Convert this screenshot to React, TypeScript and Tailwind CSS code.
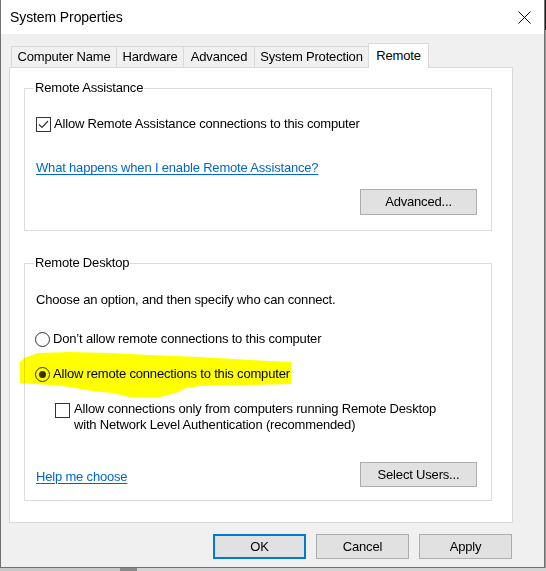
import React from "react";

function CheckBox({ checked }: { checked?: boolean }) {
  return (
    <span className="w-[15px] h-[15px] shrink-0 border border-[#333333] bg-white flex items-center justify-center">
      {checked && (
        <svg width="13" height="13" viewBox="0 0 13 13">
          <polyline points="2,6.5 5,9.5 11,3" fill="none" stroke="#333333" strokeWidth="1.2" />
        </svg>
      )}
    </span>
  );
}

function Radio({ checked }: { checked?: boolean }) {
  return (
    <span className="w-[15px] h-[15px] shrink-0 rounded-full border border-[#333333] bg-white flex items-center justify-center">
      {checked && <span className="w-[7px] h-[7px] rounded-full bg-[#333333]" />}
    </span>
  );
}

function Btn({ children, w, primary }: { children: React.ReactNode; w: string; primary?: boolean }) {
  return (
    <div
      className={`${w} flex items-center justify-center bg-[#e1e1e1] ${
        primary ? "border-2 border-[#0078d7]" : "border border-[#adadad]"
      }`}
    >
      {children}
    </div>
  );
}

function Tab({ label, w }: { label: string; w: string }) {
  return (
    <div className={`${w} h-[21px] border-t border-l border-[#d9d9d9] bg-[#f0f0f0] flex items-center justify-center`}>
      {label}
    </div>
  );
}

export default function App() {
  return (
    <div className="relative w-[546px] h-[571px] bg-[#c8c8c8] font-['Liberation_Sans',Arial,sans-serif] text-[13px] tracking-[-0.18px] text-black flex flex-col overflow-hidden">
      <div className="flex">
        <div className="w-[545px] h-[568px] border-l border-r border-b border-[#707070] bg-[#f0f0f0] flex flex-col">
          {/* title bar */}
          <div className="h-[34px] bg-white flex items-center justify-between pl-[9px] pr-[13px]">
            <span className="text-[14px] leading-none tracking-[-0.1px]">System Properties</span>
            <svg width="13" height="13" viewBox="0 0 13 13">
              <line x1="0.5" y1="0.5" x2="12.5" y2="12.5" stroke="#000" strokeWidth="1" />
              <line x1="12.5" y1="0.5" x2="0.5" y2="12.5" stroke="#000" strokeWidth="1" />
            </svg>
          </div>

          {/* tabs */}
          <div className="h-[33px] flex items-end pl-[10px]">
            <Tab label="Computer Name" w="w-[105px]" />
            <Tab label="Hardware" w="w-[67px]" />
            <Tab label="Advanced" w="w-[71px]" />
            <Tab label="System Protection" w="w-[114px]" />
            <div className="relative z-10 w-[61px] h-[25px] -mb-px border-t border-l border-r border-[#d9d9d9] bg-white flex justify-center pt-[2px]">
              Remote
            </div>
          </div>

          {/* pane */}
          <div className="ml-[8px] w-[504px] h-[456px] border border-[#d9d9d9] bg-white flex flex-col">
            {/* Remote Assistance group */}
            <div className="ml-[14px] mt-[20px] w-[468px] h-[143px] border border-[#dcdcdc] flex flex-col pl-[11px] pr-[14px]">
              <div className="-mt-[10px] h-[18px] leading-[18px] -ml-[2px] px-[1px] bg-white w-fit">Remote Assistance</div>
              <div className="mt-[17px] h-[20px] flex items-center gap-[3px]">
                <CheckBox checked />
                <span>Allow Remote Assistance connections to this computer</span>
              </div>
              <div className="mt-[24px] h-[20px] flex items-center">
                <span className="text-[#0066cc] underline underline-offset-2">What happens when I enable Remote Assistance?</span>
              </div>
              <div className="mt-[11px] flex justify-end">
                <Btn w="w-[117px] h-[26px]">Advanced...</Btn>
              </div>
            </div>

            {/* Remote Desktop group */}
            <div className="ml-[14px] mt-[32px] w-[468px] h-[238px] border border-[#dcdcdc] flex flex-col pl-[11px] pr-[14px]">
              <div className="-mt-[10px] h-[18px] leading-[18px] -ml-[2px] px-[1px] bg-white w-fit">Remote Desktop</div>
              <div className="mt-[18px] h-[20px] flex items-center">Choose an option, and then specify who can connect.</div>
              <div className="mt-[19px] h-[20px] flex items-center gap-[3px] -ml-px">
                <Radio />
                <span>Don’t allow remote connections to this computer</span>
              </div>
              <div className="mt-[15px] h-[20px] flex items-center gap-[3px] -ml-px">
                <Radio checked />
                <span>Allow remote connections to this computer</span>
              </div>
              <div className="mt-[17px] flex items-start gap-[4px] ml-[19px]">
                <div className="pt-[2px]">
                  <CheckBox />
                </div>
                <div className="leading-[16px]">
                  Allow connections only from computers running Remote Desktop
                  <br />
                  with Network Level Authentication (recommended)
                </div>
              </div>
              <div className="mt-[29px] h-[25px] flex items-center justify-between">
                <span className="mt-[4px] text-[#0066cc] underline underline-offset-2">Help me choose</span>
                <Btn w="w-[117px] h-[25px]">Select Users...</Btn>
              </div>
            </div>
          </div>

          {/* bottom buttons */}
          <div className="mt-[11px] flex gap-[10px] pl-[212px]">
            <Btn w="w-[93px] h-[25px]" primary>OK</Btn>
            <Btn w="w-[93px] h-[25px]">Cancel</Btn>
            <Btn w="w-[93px] h-[25px]">Apply</Btn>
          </div>
        </div>
        <div className="w-[1px] h-[568px] flex flex-col">
          <div className="h-[30px] bg-[#1e1e1e]" />
          <div className="flex-1 bg-[#9a9a9a]" />
        </div>
      </div>
      <div className="h-[3px] flex">
        <div className="w-[120px] bg-[#c8c8c8]" />
        <div className="w-[17px] bg-[#8a8a8a]" />
        <div className="flex-1 bg-[#d4d4d4]" />
      </div>

      {/* yellow highlighter annotation */}
      <svg
        className="absolute inset-0 pointer-events-none mix-blend-multiply"
        width="546"
        height="571"
        viewBox="0 0 546 571"
      >
        <path
          d="M20,362 L24,358 L38,353 L70,352 L110,353 L150,355 L200,357 L250,360 L291,362 L291,384 L250,385 L200,386 L186,388 L176,393 L160,397 L130,397 L112,393 L92,391 L70,387 L50,385 L20,383 Z"
          fill="#ffff00"
        />
      </svg>
    </div>
  );
}
